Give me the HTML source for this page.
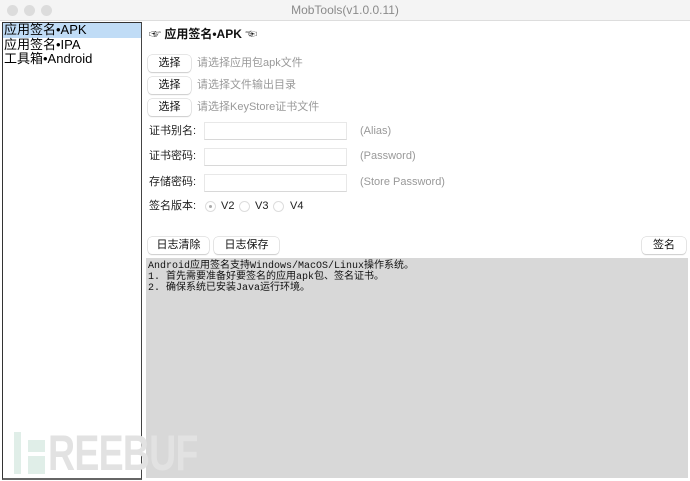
<!DOCTYPE html><html><head><meta charset="utf-8"><style>
*{margin:0;padding:0;box-sizing:border-box}
body{width:690px;height:481px;background:#fff;font-family:"Liberation Sans","Noto Sans CJK SC",sans-serif;position:relative;overflow:hidden;color:#222}
.a{position:absolute;white-space:nowrap}
.tb{left:0;top:0;width:690px;height:21px;background:#f4f4f4;border-bottom:1px solid #ddd;text-align:center;font-size:12px;line-height:21px;color:#8a8a8a}
.dot{width:11px;height:11px;border-radius:50%;background:#dcdcdc;top:5px}
.list{left:2px;top:22px;width:140px;height:458px;border:1px solid #333;border-right:1px solid #444;border-bottom:2px solid #666}
.item{font-size:13px;line-height:14.5px;height:14.5px;padding-left:1px;color:#000}
.sel{background:#c0dcf6}
.btn{background:#fff;border-radius:4px;box-shadow:0 0 0 .5px #ccc,0 1px 1px #ccc;font-size:11px;text-align:center;line-height:17px;height:17px;color:#111}
.hint{font-size:11px;color:#999;line-height:14px}
.lab{font-size:11px;color:#222;line-height:14px}
.inp{width:143px;height:18px;background:#fff;border:1px solid #e8e8e8;border-bottom-color:#d8d8d8}
.rad{width:11px;height:11px;border-radius:50%;border:1px solid #ddd;background:#fff}
.log{left:146px;top:258px;width:542px;height:220px;background:#d8d8d8;font-family:"Liberation Mono","Noto Sans CJK SC",monospace;font-size:10px;line-height:11px;padding:3px 2px;color:#111}
</style></head><body>
<div class="a tb">MobTools(v1.0.0.11)</div>
<div class="a dot" style="left:7px"></div><div class="a dot" style="left:24px"></div><div class="a dot" style="left:41px"></div>
<div class="a list"><div class="item sel">应用签名•APK</div><div class="item">应用签名•IPA</div><div class="item">工具箱•Android</div></div>
<div class="a" style="left:149px;top:25px;font-size:12px;font-weight:bold;color:#111">☞ 应用签名•APK ☜</div>
<div class="a btn" style="left:148px;top:55px;width:43px">选择</div><div class="a hint" style="left:197px;top:56px">请选择应用包apk文件</div>
<div class="a btn" style="left:148px;top:77px;width:43px">选择</div><div class="a hint" style="left:197px;top:78px">请选择文件输出目录</div>
<div class="a btn" style="left:148px;top:99px;width:43px">选择</div><div class="a hint" style="left:197px;top:100px">请选择KeyStore证书文件</div>
<div class="a lab" style="left:149px;top:124px">证书别名:</div><div class="a inp" style="left:204px;top:122px"></div><div class="a hint" style="left:360px;top:124px">(Alias)</div>
<div class="a lab" style="left:149px;top:149px">证书密码:</div><div class="a inp" style="left:204px;top:148px"></div><div class="a hint" style="left:360px;top:149px">(Password)</div>
<div class="a lab" style="left:149px;top:175px">存储密码:</div><div class="a inp" style="left:204px;top:174px"></div><div class="a hint" style="left:360px;top:175px">(Store Password)</div>
<div class="a lab" style="left:149px;top:199px">签名版本:</div>
<div class="a rad" style="left:205px;top:201px"><div style="width:3px;height:3px;border-radius:50%;background:#aaa;margin:3px"></div></div><div class="a lab" style="left:221px;top:199px">V2</div>
<div class="a rad" style="left:239px;top:201px"></div><div class="a lab" style="left:255px;top:199px">V3</div>
<div class="a rad" style="left:273px;top:201px"></div><div class="a lab" style="left:290px;top:199px">V4</div>
<div class="a btn" style="left:148px;top:237px;width:61px">日志清除</div>
<div class="a btn" style="left:214px;top:237px;width:65px">日志保存</div>
<div class="a btn" style="left:642px;top:237px;width:44px">签名</div>
<div class="a log">Android应用签名支持Windows/MacOS/Linux操作系统。<br>1. 首先需要准备好要签名的应用apk包、签名证书。<br>2. 确保系统已安装Java运行环境。</div>
<div class="a" style="left:14px;top:432px;width:7px;height:42px;background:#e0eee8"></div>
<div class="a" style="left:28px;top:440px;width:17px;height:12px;background:#e0eee8"></div>
<div class="a" style="left:28px;top:456px;width:17px;height:18px;background:#e0eee8"></div>
<div class="a" style="left:48px;top:428px;font-size:50px;font-weight:bold;color:#e2e2e2;letter-spacing:-1px;line-height:50px;transform:scaleX(.75);transform-origin:left">REEBUF</div>
</body></html>
